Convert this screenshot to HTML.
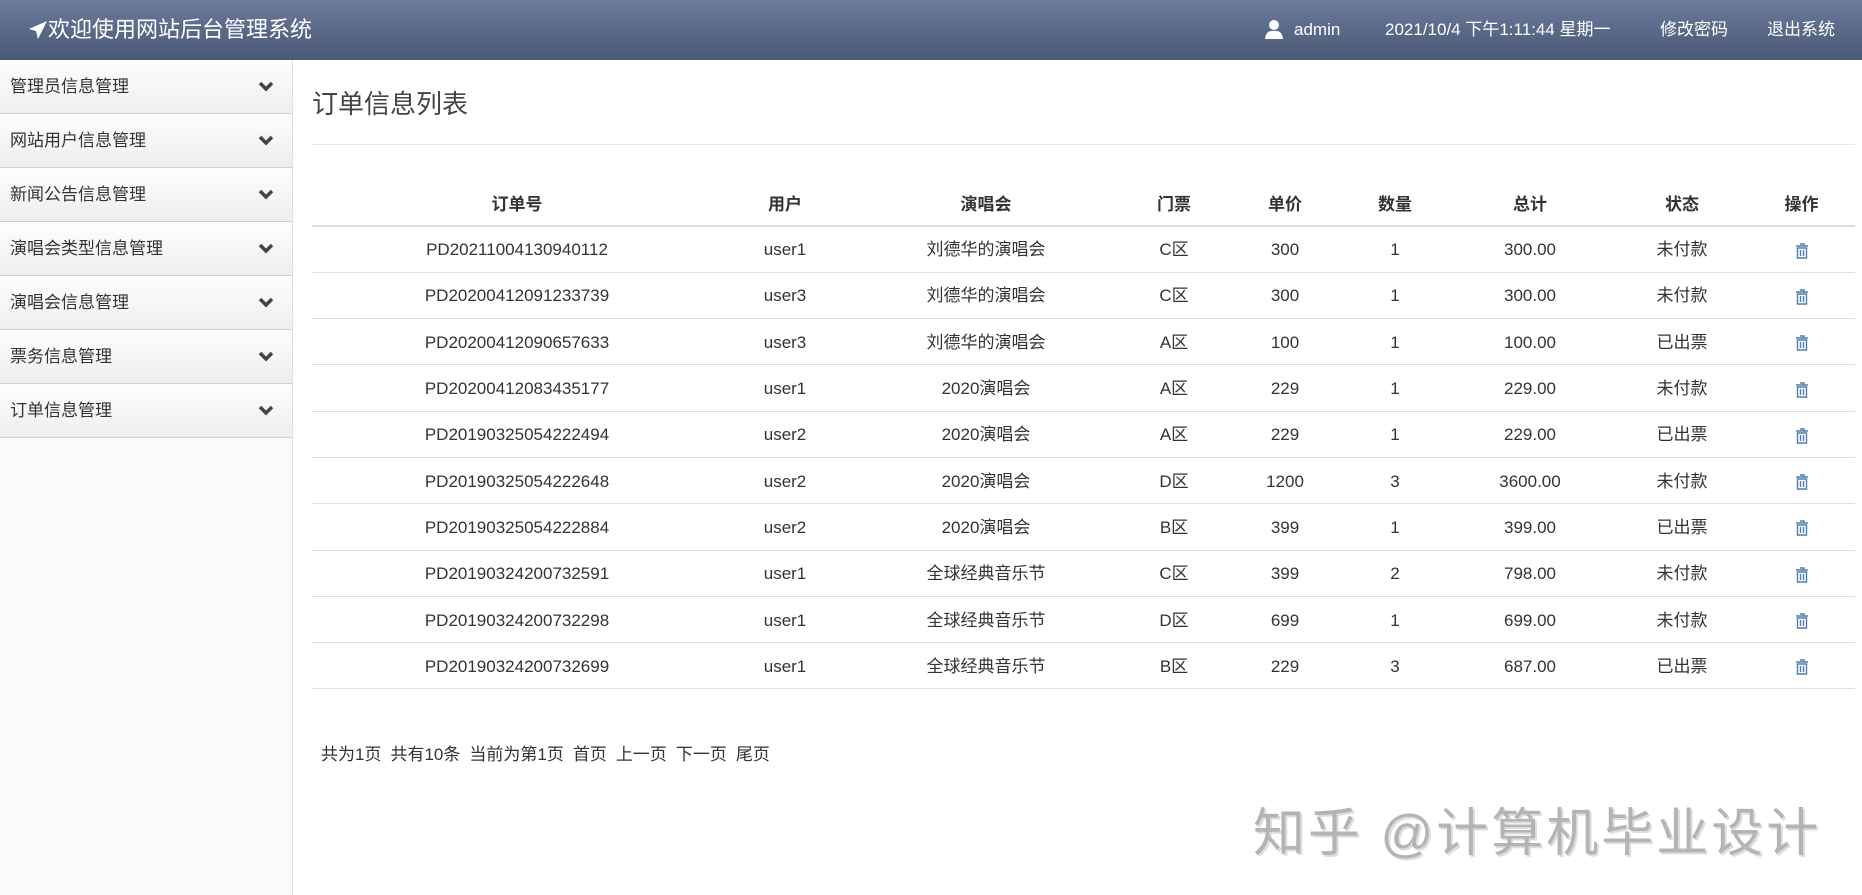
<!DOCTYPE html>
<html><head><meta charset="utf-8"><style>
*{margin:0;padding:0;box-sizing:border-box}
body{width:1862px;height:895px;overflow:hidden;background:#fff;font-family:"Liberation Sans","Noto Sans CJK SC",sans-serif;color:#333;position:relative}
.hd{position:absolute;left:0;top:0;width:1862px;height:60px;background:linear-gradient(#6b7b9b,#4b5877);color:#fff}
.hd .t{position:absolute;left:28px;top:15px;font-size:22px;line-height:30px;display:flex;align-items:center}
.hd .r{position:absolute;top:17px;font-size:17px;line-height:26px;height:26px}
.sb{position:absolute;left:0;top:60px;width:293px;height:835px;background:#fafafa;border-right:1px solid #ddd}
.it{height:54px;border-bottom:1px solid #cfcfcf;background:linear-gradient(#fefefe,#eee);font-size:17px;line-height:54px;padding-left:10px;position:relative;color:#333}
.it svg{position:absolute;left:258px;top:21px}
h2{position:absolute;left:312px;top:84px;font-size:26px;font-weight:normal;color:#444}
.hr{position:absolute;left:312px;top:144px;width:1543px;border-top:1px solid #e8e8e8}
table{position:absolute;left:312px;top:180px;width:1543px;border-collapse:collapse;font-size:17px;color:#333}
th{height:46px;border-bottom:2px solid #ddd;font-weight:bold;vertical-align:middle}
td{height:46.3px;border-bottom:1px solid #ddd;text-align:center;vertical-align:middle;line-height:20px;padding-top:2px}
.pg{position:absolute;left:321px;top:740px;font-size:17px}
.pg span{margin-right:9px}
.wm{position:absolute;left:1253px;top:791px;font-size:52px;color:#b4b4b4;letter-spacing:3px;text-shadow:2px 2px 0 #ddd}
</style></head><body>
<div class="hd">
<div class="t"><svg width="20" height="20" viewBox="0 0 20 20"><path d="M19 1 L1 9 L8 11 L10 19 Z" fill="#fff"/></svg>欢迎使用网站后台管理系统</div>
<svg style="position:absolute;left:1264px;top:19px" width="20" height="20" viewBox="0 0 20 20"><circle cx="10" cy="6" r="5" fill="#fff"/><path d="M1 20 Q2 11 10 12 Q18 11 19 20Z" fill="#fff"/></svg>
<div class="r" style="left:1294px">admin</div>
<div class="r" style="left:1385px">2021/10/4 下午1:11:44 星期一</div>
<div class="r" style="left:1660px">修改密码</div>
<div class="r" style="left:1767px">退出系统</div>
</div>
<div class="sb">
<div class="it">管理员信息管理<svg width="16" height="12" viewBox="0 0 16 12"><path d="M2 2 L8 8 L14 2" stroke="#444" stroke-width="3.5" fill="none"/></svg></div>
<div class="it">网站用户信息管理<svg width="16" height="12" viewBox="0 0 16 12"><path d="M2 2 L8 8 L14 2" stroke="#444" stroke-width="3.5" fill="none"/></svg></div>
<div class="it">新闻公告信息管理<svg width="16" height="12" viewBox="0 0 16 12"><path d="M2 2 L8 8 L14 2" stroke="#444" stroke-width="3.5" fill="none"/></svg></div>
<div class="it">演唱会类型信息管理<svg width="16" height="12" viewBox="0 0 16 12"><path d="M2 2 L8 8 L14 2" stroke="#444" stroke-width="3.5" fill="none"/></svg></div>
<div class="it">演唱会信息管理<svg width="16" height="12" viewBox="0 0 16 12"><path d="M2 2 L8 8 L14 2" stroke="#444" stroke-width="3.5" fill="none"/></svg></div>
<div class="it">票务信息管理<svg width="16" height="12" viewBox="0 0 16 12"><path d="M2 2 L8 8 L14 2" stroke="#444" stroke-width="3.5" fill="none"/></svg></div>
<div class="it">订单信息管理<svg width="16" height="12" viewBox="0 0 16 12"><path d="M2 2 L8 8 L14 2" stroke="#444" stroke-width="3.5" fill="none"/></svg></div>
</div>
<h2>订单信息列表</h2>
<div class="hr"></div>
<table>
<colgroup><col style="width:410px"><col style="width:126px"><col style="width:276px"><col style="width:100px"><col style="width:122px"><col style="width:98px"><col style="width:172px"><col style="width:132px"><col style="width:107px"></colgroup>
<tr><th>订单号</th><th>用户</th><th>演唱会</th><th>门票</th><th>单价</th><th>数量</th><th>总计</th><th>状态</th><th>操作</th></tr>
<tr><td>PD20211004130940112</td><td>user1</td><td>刘德华的演唱会</td><td>C区</td><td>300</td><td>1</td><td>300.00</td><td>未付款</td><td>T</td></tr>
<tr><td>PD20200412091233739</td><td>user3</td><td>刘德华的演唱会</td><td>C区</td><td>300</td><td>1</td><td>300.00</td><td>未付款</td><td>T</td></tr>
<tr><td>PD20200412090657633</td><td>user3</td><td>刘德华的演唱会</td><td>A区</td><td>100</td><td>1</td><td>100.00</td><td>已出票</td><td>T</td></tr>
<tr><td>PD20200412083435177</td><td>user1</td><td>2020演唱会</td><td>A区</td><td>229</td><td>1</td><td>229.00</td><td>未付款</td><td>T</td></tr>
<tr><td>PD20190325054222494</td><td>user2</td><td>2020演唱会</td><td>A区</td><td>229</td><td>1</td><td>229.00</td><td>已出票</td><td>T</td></tr>
<tr><td>PD20190325054222648</td><td>user2</td><td>2020演唱会</td><td>D区</td><td>1200</td><td>3</td><td>3600.00</td><td>未付款</td><td>T</td></tr>
<tr><td>PD20190325054222884</td><td>user2</td><td>2020演唱会</td><td>B区</td><td>399</td><td>1</td><td>399.00</td><td>已出票</td><td>T</td></tr>
<tr><td>PD20190324200732591</td><td>user1</td><td>全球经典音乐节</td><td>C区</td><td>399</td><td>2</td><td>798.00</td><td>未付款</td><td>T</td></tr>
<tr><td>PD20190324200732298</td><td>user1</td><td>全球经典音乐节</td><td>D区</td><td>699</td><td>1</td><td>699.00</td><td>未付款</td><td>T</td></tr>
<tr><td>PD20190324200732699</td><td>user1</td><td>全球经典音乐节</td><td>B区</td><td>229</td><td>3</td><td>687.00</td><td>已出票</td><td>T</td></tr>
</table>
<div class="pg"><span>共为1页</span><span>共有10条</span><span>当前为第1页</span><span>首页</span><span>上一页</span><span>下一页</span><span>尾页</span></div>
<div class="wm">知乎 @计算机毕业设计</div>
<script>
document.querySelectorAll('td:last-child').forEach(function(td){td.innerHTML='<svg width="14" height="16" viewBox="0 0 14 16" style="vertical-align:middle"><path d="M5 1h4v2M1 3h12M2.5 5h9v10h-9z M5.5 7v6 M8.5 7v6" stroke="#4f7fb0" stroke-width="1.4" fill="none"/></svg>';});
</script>
</body></html>
